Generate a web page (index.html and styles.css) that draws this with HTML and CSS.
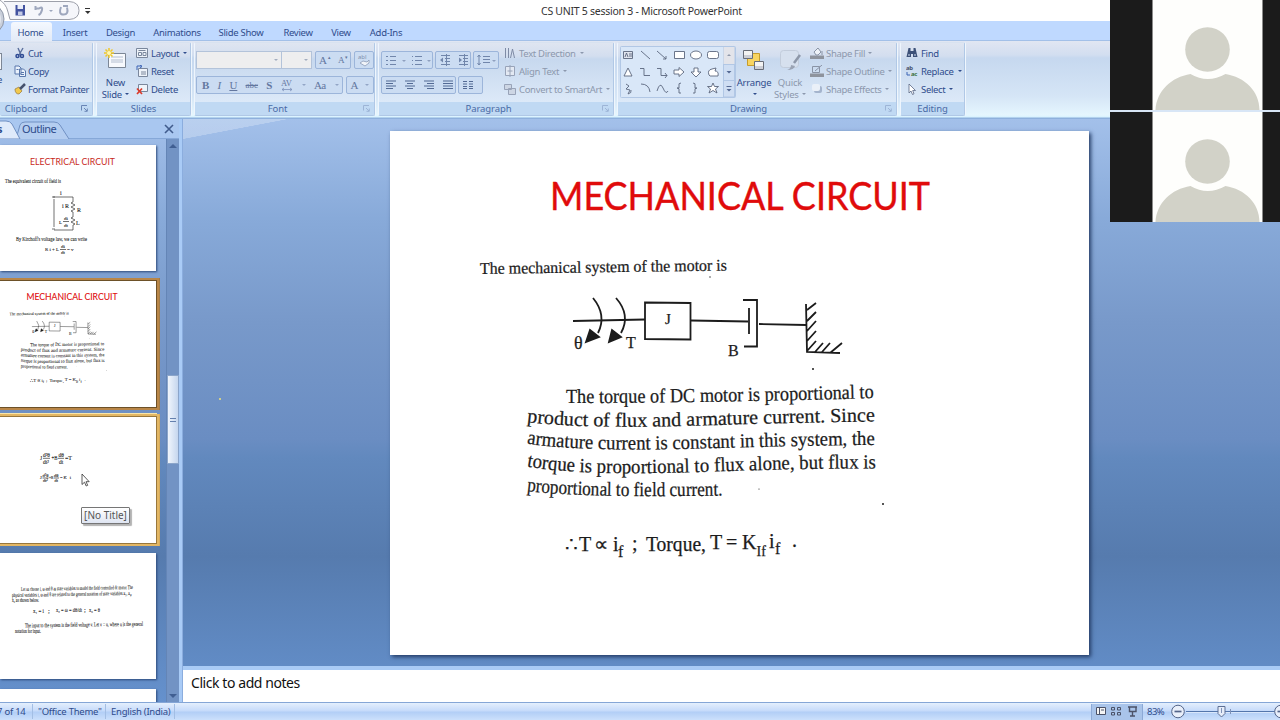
FILE: index.html
```html
<!DOCTYPE html>
<html lang="en">
<head>
  <meta charset="UTF-8">
  <meta name="viewport" content="width=device-width, initial-scale=1.0">
  <title>CS UNIT 5 session 3 - Microsoft PowerPoint</title>
  <link rel="stylesheet" href="styles.css">
</head>
<body>
  <!-- shared drawings -->
  <svg class="defs" width="0" height="0">
    <symbol id="launcher" viewBox="0 0 7 7"><path d="M.5 5.500V.5H6M3 3l3 3M6.300 3.500v2.800H3.500" fill="none" stroke="currentColor"/></symbol>
    <symbol id="slide-mech" viewBox="390 131 700 525">
      <text x="550" y="210" class="slide-title" textLength="380" lengthAdjust="spacingAndGlyphs">MECHANICAL CIRCUIT</text>
      <g class="scan">
        <text x="480" y="274" font-size="16.500" textLength="247" lengthAdjust="spacingAndGlyphs" transform="rotate(-.8 480 274)">The mechanical system of the motor is</text>
        <g class="wire">
          <path d="M573 321L645 319.500M691 320.500L748 321.500M759 324L806 325"/>
          <path d="M645 302.500L690.500 303V339.500L645 339Z"/>
          <path d="M743 300H757V346.500H744M749 308V334"/>
          <path d="M806 304L807 352L840 353M807 310l9-7M807 321l9-9M807 331l9-10M807 341l9-10M807 351l9-10M815 352l8-9M822 352l8-9M830 353l12-10"/>
          <path d="M593 298Q607 315 598 333M616 298Q631 315 621 333"/>
          <path class="head" d="M586 342L590 330L599 337ZM609 342L612 330L621 337Z"/>
        </g>
        <text x="574" y="349" font-size="18">θ</text>
        <text x="626" y="348" font-size="16">T</text>
        <text x="665" y="324" font-size="15">J</text>
        <text x="728" y="356" font-size="16">B</text>
        <path id="l1" d="M566 403Q700 403 876 398" fill="none"/>
        <path id="l2" d="M527 422Q580 429 700 425.500T876 421.500" fill="none"/>
        <path id="l3" d="M527 443.500Q580 452 700 448.500T876 445" fill="none"/>
        <path id="l4" d="M527 466.500Q580 476 700 472T877 468.500" fill="none"/>
        <path id="l5" d="M527 491Q580 498 725 495.500" fill="none"/>
        <text class="para"><textPath href="#l1" textLength="308" lengthAdjust="spacingAndGlyphs">The torque of DC motor is proportional to</textPath></text>
        <text class="para"><textPath href="#l2" textLength="348" lengthAdjust="spacingAndGlyphs">product of flux and armature current. Since</textPath></text>
        <text class="para"><textPath href="#l3" textLength="348" lengthAdjust="spacingAndGlyphs">armature current is constant in this system, the</textPath></text>
        <text class="para"><textPath href="#l4" textLength="349" lengthAdjust="spacingAndGlyphs">torque is proportional to flux alone, but flux is</textPath></text>
        <text class="para"><textPath href="#l5" textLength="196" lengthAdjust="spacingAndGlyphs">proportional to field current.</textPath></text>
        <text class="para" y="551"><tspan x="565">∴</tspan><tspan x="579">T</tspan><tspan x="594">∝</tspan><tspan x="613">i</tspan><tspan x="618" y="557" font-size="16">f</tspan><tspan x="632" y="550">;</tspan></text>
        <text class="para" x="646" y="551" textLength="60" lengthAdjust="spacingAndGlyphs">Torque,</text>
        <text class="para" y="549"><tspan x="710">T</tspan><tspan x="726">=</tspan><tspan x="742">K</tspan><tspan x="756.500" y="556" font-size="14">If</tspan><tspan x="769" y="548">i</tspan><tspan x="775" y="554" font-size="16">f</tspan><tspan x="792" y="547">.</tspan></text>
        <circle cx="883" cy="504" r="1"/><circle cx="813" cy="369" r="1"/><circle cx="710" cy="277" r=".7"/><circle cx="759" cy="489" r=".6"/>
      </g>
    </symbol>
    <symbol id="person" viewBox="0 0 110 110">
      <rect width="110" height="110" fill="#fefefc"/>
      <circle cx="55" cy="49.500" r="22.300" fill="#d2d2c8"/>
      <path d="M3 110C4 91 19 77 38 74Q55 84 73 74C92 77 107 91 107 110Z" fill="#d2d2c8"/>
    </symbol>
  </svg>

  <div class="app">
    <header class="titlebar">
      <svg class="quick" width="96" height="21" viewBox="0 0 96 21">
        <path d="M-2 -1Q6 3 8 12L10 19.500H69Q79 19 79 10.500T69 1.500H4" fill="#f5f6fa" stroke="#9da0aa"/>
        <path d="M15.500 5h9.500v10.500h-9.500z" fill="#4353a0"/><path d="M17.500 5h5.500v4h-5.500z" fill="#e9edf8"/><path d="M18 11.500h4.500V15H18z" fill="#c3cae6"/>
        <g fill="none" stroke="#9ea7bd" stroke-width="2"><path d="M36 8.500h3q4-2.500 3 1.500t-3.500 5M35.500 6v4"/><path d="M67 7.500q2 7-3.500 7t-2.500-7.500M63 6h5"/></g>
        <path d="M49 10h4l-2 2z" fill="#9ea7bd"/>
        <path d="M85 8.500h5" stroke="#333"/><path d="M85 11h5.500l-2.700 3z" fill="#333"/>
      </svg>
      <span class="doc-name">CS UNIT 5 session 3 - Microsoft PowerPoint</span>
    </header>

    <nav class="tabs">
      <span class="tab active">Home</span>
      <span class="tab t-insert">Insert</span>
      <span class="tab t-design">Design</span>
      <span class="tab t-anim">Animations</span>
      <span class="tab t-show">Slide Show</span>
      <span class="tab t-review">Review</span>
      <span class="tab t-view">View</span>
      <span class="tab t-add">Add-Ins</span>
    </nav>
    <svg class="orb" width="6" height="32" viewBox="0 0 6 32"><circle cx="-12" cy="17" r="16" fill="#c9cfda" stroke="#8e97a8"/><circle cx="-12" cy="17" r="13" fill="#e4e8ef"/></svg>

    <div class="ribbon">
      <section class="group clipboard">
        <div class="body">
          <div class="paste"><i></i><span>e</span></div>
          <div class="stack">
            <div class="cmd"><svg width="12" height="12" viewBox="0 0 12 12"><path d="M4 1l3 7M9 1L5 8" stroke="#5b6f9c" stroke-width="1.400"/><g fill="none" stroke="#2f4b94" stroke-width="1.500"><circle cx="3.500" cy="9" r="1.500"/><circle cx="8" cy="9" r="1.500"/></g></svg>Cut</div>
            <div class="cmd"><svg width="12" height="12" viewBox="0 0 12 12"><path d="M1 1h4l2 2v6H1zM5.500 4h4l2 2v5.500h-6z" fill="#e9f1fc" stroke="#5876ab"/><path d="M7 7.500h3M7 9.500h3M2.500 4.500h2" stroke="#5876ab"/></svg>Copy</div>
            <div class="cmd"><svg width="12" height="12" viewBox="0 0 12 12"><path d="M1 6l4-2 3 4-3 3Q1 11 1 6z" fill="#f2c94c" stroke="#96773a" stroke-width=".7"/><path d="M6 6l5-5" stroke="#45516e" stroke-width="2.500"/></svg>Format Painter</div>
          </div>
        </div>
        <div class="label"><span>Clipboard</span><svg><use href="#launcher"/></svg></div>
      </section>

      <section class="group slides">
        <div class="body">
          <div class="big">
            <svg width="24" height="24" viewBox="0 0 24 24"><path d="M4.500 5.500h17v14h-17z" fill="#f7f9fd" stroke="#7c8796"/><path d="M7 9h12M7 12h12M7 14h12" stroke="#b3bed0"/><path d="M5 0v10M0 5h10M1.500 1.500l7 7M8.500 1.500l-7 7" stroke="#f1c928" stroke-width="1.500"/><circle cx="5" cy="5" r="2" fill="#fff7b4"/></svg>
            <span>New</span><span>Slide <b></b></span>
          </div>
          <div class="stack">
            <div class="cmd"><svg width="12" height="12" viewBox="0 0 12 12"><path d="M.5 1.500h11v9H.5z" fill="#eef3fa" stroke="#7a879c"/><path d="M2.500 3.500h7M2.500 5.500h3v3h-3zM7 5.500h3v3H7z" fill="none" stroke="#7a879c"/></svg>Layout <b></b></div>
            <div class="cmd"><svg width="12" height="12" viewBox="0 0 12 12"><path d="M2.500 3.500h9v8h-9z" fill="#eef3fa" stroke="#7a879c"/><path d="M5 7h5M5 9h5" stroke="#7a879c"/><path d="M1 5V1h5M4 0l2 1.500L4 3" fill="none" stroke="#3d64b5"/></svg>Reset</div>
            <div class="cmd"><svg width="12" height="12" viewBox="0 0 12 12"><path d="M2.500 1.500h9v7h-9z" fill="#eef3fa" stroke="#7a879c"/><path d="M1 5.500l5 5.500M6 5.500L1 11" stroke="#dc3b2b" stroke-width="1.700"/></svg>Delete</div>
          </div>
        </div>
        <div class="label"><span>Slides</span></div>
      </section>

      <section class="group font">
        <div class="body rows">
          <div class="row">
            <div class="combo wide"><b></b></div><div class="combo"><b></b></div>
            <div class="box serif grow">A<sup>▴</sup><small>A<sup>▾</sup></small></div>
            <div class="box clear"><svg width="14" height="13" viewBox="0 0 14 13"><text x="1" y="5" font-size="6" fill="#7f8fae">abl</text><path d="M3 9l3-2 4 1 2-2v3l-4 3z" fill="#f1f4f9" stroke="#8d9cb8" stroke-width=".8"/></svg></div>
          </div>
          <div class="row">
            <div class="box serif letters"><strong>B</strong><em>I</em><u>U</u><s>abc</s><strong>S</strong><svg width="12" height="13" viewBox="0 0 12 13"><text x="0" y="7" font-size="8.500" textLength="11" fill="#63779f">AV</text><path d="M1 10.500h10M3 9l-2 1.500L3 12M9 9l2 1.500L9 12" fill="none" stroke="#7d92ba" stroke-width=".8"/></svg><b></b><span>Aa</span><b></b></div>
            <div class="box serif colour">A <b></b></div>
          </div>
        </div>
        <div class="label"><span>Font</span><svg class="off"><use href="#launcher"/></svg></div>
      </section>

      <section class="group paragraph">
        <div class="body">
          <div class="rows">
            <div class="row">
              <div class="box"><svg width="50" height="16" viewBox="0 0 50 16"><path d="M4 4.500h2M4 8.500h2M4 12.500h2M8 4.500h6M8 8.500h6M8 12.500h6M30 4.500h1M30 8.500h1M30 12.500h1M33 4.500h7M33 8.500h7M33 12.500h7" stroke="#7186ab"/><path d="M20 8h4l-2 2zM45 8h4l-2 2z" fill="#8fa0bf"/></svg></div>
              <div class="box"><svg width="34" height="16" viewBox="0 0 34 16"><path d="M5 3.500h9M9 6.500h5M9 9.500h5M5 12.500h9M23 3.500h9M27 6.500h5M27 9.500h5M23 12.500h9M10.500 2v12M28.500 2v12" stroke="#7186ab"/><path d="M4 8l3-2.500v5zM26 8l-3-2.500v5z" fill="#7186ab"/></svg></div>
              <div class="box"><svg width="24" height="16" viewBox="0 0 24 16"><path d="M5 3v10M3.500 5L5 3l1.500 2M3.500 11L5 13l1.500-2M9 4.500h7M9 7.500h7M9 10.500h7" stroke="#7186ab" fill="none"/><path d="M18 8h4l-2 2z" fill="#8fa0bf"/></svg></div>
            </div>
            <div class="row">
              <div class="box"><svg width="73" height="16" viewBox="0 0 73 16"><path d="M4 4h10M4 6.500h7M4 9h10M4 11.500h7M23 4h10M25 6.500h6M23 9h10M25 11.500h6M42 4h10M45 6.500h7M42 9h10M45 11.500h7M61 4h10M61 6.500h10M61 9h10M61 11.500h10" stroke="#536a94"/></svg></div>
              <div class="box"><svg width="23" height="16" viewBox="0 0 23 16"><path d="M4 4.500h4M4 7h4M4 9.500h4M4 11.500h4M10 4.500h4M10 7h4M10 9.500h4M10 11.500h4" stroke="#536a94"/></svg></div>
            </div>
          </div>
          <div class="stack dim">
            <div class="cmd"><svg width="12" height="12" viewBox="0 0 12 12"><path d="M1.500 1v10M4.500 1v10M6.500 11l2-9 2 9" stroke="#7f8ba5" fill="none"/></svg>Text Direction <b></b></div>
            <div class="cmd"><svg width="12" height="12" viewBox="0 0 12 12"><path d="M1.500 1.500h9v9h-9z" fill="#e3e9f3" stroke="#98a3b8"/><path d="M3.500 6h5M6 0v12" stroke="#98a3b8"/></svg>Align Text <b></b></div>
            <div class="cmd"><svg width="12" height="12" viewBox="0 0 12 12"><path d="M.5 1.500h7v5h-7zM4.500 5.500h7v6h-7z" fill="#cdd6e4" stroke="#98a3b8"/></svg>Convert to SmartArt <b></b></div>
          </div>
        </div>
        <div class="label"><span>Paragraph</span><svg class="off"><use href="#launcher"/></svg></div>
      </section>

      <section class="group drawing">
        <div class="body">
          <svg class="gallery" width="116" height="53" viewBox="0 0 116 53">
            <rect x=".5" y=".5" width="115" height="51" rx="1" fill="#d9e7f8" stroke="#b1c7e5"/>
            <g fill="none" stroke="#5b667e" stroke-width=".9">
              <path d="M3.500 5.500h9v7h-9z" fill="#dfe4ee"/><path d="M5 11l1.500-4L8 11M9 8h3M9 10h3"/>
              <path d="M21 5l9 8M37 5l9 8M46 10v3h-3"/><path d="M54.500 5.500h10v7h-10z" fill="#fff"/><ellipse cx="76" cy="9" rx="5.500" ry="4" fill="#fff"/><rect x="87.500" y="5.500" width="11" height="7" rx="2" fill="#fff"/>
              <path d="M4 30l4-8 4 8z" fill="#fff"/><path d="M20 22.500h4v7h6M37 22.500h4v7h6M45 27l2 2.500-2 2.500"/><path d="M54 24h5v-2.500l5 4.500-5 4.500V28h-5zM74 22h4v4h3l-5 5-5-5h3z" fill="#fff"/><path d="M89 29q-2-5 3-6l4-1-1 3q4 0 3 5h-8z" fill="#fff"/>
              <path d="M6 38l3 2-3 3 4 1-2 4q4-1 3-4"/><path d="M21 38q8 0 9 8M37 45q3-10 6-3t5 3"/><path d="M61 37q-3 0-2 3t-2 2q3 0 2 3t2 2M73 37q3 0 2 3t2 2q-3 0-2 3t-2 2"/><path d="M93 37l1.500 3.500h4L95.500 43l1.500 4-4-2.500L89 47l1.500-4-3-2.500h4z" fill="#fff"/>
            </g>
            <path d="M103.500 1h11v50h-11z" fill="#cfdef3" stroke="#b1c7e5"/><path d="M103.500 1h11v17h-11z" fill="#e3e4ea"/><path d="M103.500 18.500h11M103.500 34.500h11" stroke="#b1c7e5"/>
            <path d="M107 10h4l-2-2z" fill="#8f98aa"/><path d="M106.500 25h5l-2.500 2.500zM106.500 43h5l-2.500 2.500z" fill="#566a94"/><path d="M106.500 40.500h5" stroke="#566a94"/>
          </svg>
          <div class="big arrange">
            <svg width="22" height="22" viewBox="0 0 22 22"><path d="M4.500 4.500h12v12h-12z" fill="#f8d460" stroke="#c79c2a"/><path d="M.5 1.500h9v8h-9zM11.500 12.500h9v8h-9z" fill="#f3f3f3" stroke="#686d78"/><path d="M1 7.500h8M12 18.500h8" stroke="#cdcfd6" stroke-width="3"/></svg>
            <span>Arrange</span><span><b></b></span>
          </div>
          <div class="big dim quick-styles">
            <svg width="22" height="22" viewBox="0 0 22 22"><rect x="1.500" y="1.500" width="18" height="17" rx="3" fill="#d6e0ee" stroke="#c2ccdb"/><path d="M21 6l-6 8" stroke="#8d97a9" stroke-width="2.500"/><path d="M8 21q4-1 4-5l4 1q-1 4-8 4z" fill="#9aa3b3"/></svg>
            <span>Quick</span><span>Styles <b></b></span>
          </div>
          <div class="stack dim">
            <div class="cmd"><svg width="14" height="12" viewBox="0 0 14 12"><path d="M0 8.500h14V12H0z" fill="#8e939d"/><path d="M4 5l4-4 3 4-3 3H6zM12 4v4" fill="#eef2f8" stroke="#8993a5"/></svg>Shape Fill <b></b></div>
            <div class="cmd"><svg width="14" height="12" viewBox="0 0 14 12"><path d="M0 8.500h14V12H0z" fill="#8e939d"/><path d="M2.500 1.500h7v6h-7zM5 6l7-6" fill="none" stroke="#8993a5"/></svg>Shape Outline <b></b></div>
            <div class="cmd"><svg width="14" height="12" viewBox="0 0 14 12"><rect x="4" y="3" width="8" height="7" rx="2" fill="#a4b4cd"/><rect x="2" y="1" width="8" height="7" rx="2" fill="#eaf0f8"/></svg>Shape Effects <b></b></div>
          </div>
        </div>
        <div class="label"><span>Drawing</span><svg class="off"><use href="#launcher"/></svg></div>
      </section>

      <section class="group editing">
        <div class="body">
          <div class="stack">
            <div class="cmd"><svg width="12" height="12" viewBox="0 0 12 12"><path d="M2.500 1h2v3h3V1h2l2 9H7V7H5v3H.5z" fill="#3d5178"/><path d="M2 8h2M8 8h2" stroke="#d6e2f4"/></svg>Find</div>
            <div class="cmd"><svg width="12" height="12" viewBox="0 0 12 12"><text x="0" y="5" font-size="6" font-weight="bold" fill="#45516e">ab</text><text x="5" y="11" font-size="6" font-weight="bold" fill="#3c7040">ac</text><path d="M1 7v3h3" fill="none" stroke="#3d64b5"/></svg>Replace <b></b></div>
            <div class="cmd"><svg width="12" height="12" viewBox="0 0 12 12"><path d="M3 1v9l2-2 1.500 3.500 1.500-.7L6.700 7.500h2.800z" fill="#fff" stroke="#5b6784" stroke-width=".8"/></svg>Select <b></b></div>
          </div>
        </div>
        <div class="label"><span>Editing</span></div>
      </section>
    </div>

    <main class="work">
      <aside class="panel">
        <div class="panel-tabs">
          <svg width="72" height="20" viewBox="0 0 72 20"><path d="M16 20L20 6Q21 3 25 3H54Q58 3 60 6L69 20" fill="#b4cdf0" stroke="#7191c3"/><path d="M-1 2H6Q10 2 12 5L20 20H-1z" fill="#dfeafa" stroke="#7191c3"/></svg>
          <span class="pt-first">s</span><span class="pt-outline">Outline</span>
          <svg class="close" width="10" height="10" viewBox="0 0 10 10"><path d="M1 1l8 8M9 1L1 9" stroke="#415c8d" stroke-width="1.600"/></svg>
        </div>
        <div class="panel-body">
          <div class="thumbs">
            <div class="thumb">
              <svg width="156" height="126" viewBox="0 145 156 126">
                <text x="30" y="164.500" class="thumb-title" textLength="85" lengthAdjust="spacingAndGlyphs">ELECTRICAL CIRCUIT</text>
                <g class="scan small">
                  <text x="5" y="183" textLength="56" lengthAdjust="spacingAndGlyphs">The equivalent circuit of field is</text>
                  <path d="M53 197H73M54 230H73M73 197v5l-2 1 4 2-4 2 4 2-4 2 2 1v5l-2 1 4 2-4 2 4 2-2 1v5M54 199v28M52 197h3M52 229h3" class="thin"/>
                  <text x="60" y="195" font-size="6">i</text><text x="62" y="208" font-size="6" textLength="7">iR</text><text x="77" y="212" font-size="6">R</text><text x="76" y="225" font-size="6">L</text>
                  <text x="59" y="224" font-size="5">L</text><text x="64" y="220" font-size="5">di</text><path d="M63 221.500h6" class="thin"/><text x="64" y="227" font-size="5">dt</text>
                  <text x="16" y="241" textLength="71" lengthAdjust="spacingAndGlyphs">By Kirchoff's voltage law, we can write</text>
                  <text x="45" y="251" font-size="5" textLength="14" lengthAdjust="spacingAndGlyphs">R i + L</text><text x="61" y="248" font-size="5">di</text><path d="M60 249.500h6" class="thin"/><text x="61" y="254" font-size="5">dt</text><text x="67" y="251" font-size="5">= v</text>
                </g>
              </svg>
            </div>
            <div class="thumb current"><svg class="mech" width="168" height="126"><use href="#slide-mech"/></svg></div>
            <div class="thumb hover">
              <svg width="156" height="126" viewBox="0 417 156 126">
                <g class="scan small">
                  <text x="40" y="459.500" font-size="5.500">J</text><text x="43" y="457" font-size="5.500" textLength="7" lengthAdjust="spacingAndGlyphs">d²θ</text><path d="M43 458.300h7M58 458.300h6" class="thin"/><text x="43" y="464" font-size="5.500" textLength="6" lengthAdjust="spacingAndGlyphs">dt²</text><text x="51.500" y="459.500" font-size="5.500" textLength="6" lengthAdjust="spacingAndGlyphs">+B</text><text x="58.500" y="457" font-size="5.500">dθ</text><text x="59" y="463.500" font-size="5.500">dt</text><text x="65" y="459.500" font-size="5.500" textLength="7" lengthAdjust="spacingAndGlyphs">=T</text>
                  <text x="40" y="479" font-size="4.500">J</text><text x="42.500" y="477" font-size="4.500" textLength="6" lengthAdjust="spacingAndGlyphs">d²θ</text><path d="M42.500 478h6M54 478h5" class="thin"/><text x="43" y="482" font-size="4.500" textLength="5" lengthAdjust="spacingAndGlyphs">dt²</text><text x="49" y="479" font-size="4.500" textLength="4.500" lengthAdjust="spacingAndGlyphs">+B</text><text x="54" y="477" font-size="4.500">dθ</text><text x="54.500" y="482" font-size="4.500">dt</text><text x="60" y="479" font-size="4.500" textLength="11">=K i</text>
                </g>
              </svg>
            </div>
            <div class="thumb">
              <svg width="156" height="126" viewBox="0 553 156 126">
                <g class="scan small">
                  <text x="21" y="591" textLength="112" font-size="5.500" lengthAdjust="spacingAndGlyphs" transform="rotate(-1 21 591)">Let us choose i, ω and θ as state variables to model the field controlled dc motor. The</text>
                  <text x="12" y="597" textLength="120" font-size="5.500" lengthAdjust="spacingAndGlyphs" transform="rotate(-1 12 597)">physical variables i, ω and θ are related to the general notation of state variables x₁, x₂,</text>
                  <text x="12" y="602" textLength="27" font-size="5.500" lengthAdjust="spacingAndGlyphs">x₃ as shown below.</text>
                  <g font-size="6.500"><text x="33" y="613" textLength="11" lengthAdjust="spacingAndGlyphs">x₁ = i</text><text x="48" y="613">;</text><text x="56" y="612" textLength="26" lengthAdjust="spacingAndGlyphs">x₂ = ω = dθ/dt</text><text x="84" y="612">;</text><text x="89" y="612" textLength="11" lengthAdjust="spacingAndGlyphs">x₃ = θ</text></g>
                  <text x="25" y="627.500" textLength="118" font-size="6" lengthAdjust="spacingAndGlyphs" transform="rotate(-.8 25 627)">The input to the system is the field voltage v. Let v = u, where u is the general</text>
                  <text x="15" y="633" textLength="26" font-size="5.500" lengthAdjust="spacingAndGlyphs">notation for input.</text>
                </g>
              </svg>
            </div>
            <div class="thumb last"></div>
          </div>
          <div class="scroll">
            <div class="arrow up"></div>
            <div class="handle"></div>
            <div class="arrow down"></div>
          </div>
        </div>
        <div class="tooltip">[No Title]</div>
        <svg class="pointer" width="9" height="14" viewBox="0 0 9 14"><path d="M1 1v10.500l2.500-2.300L5.200 13l1.500-.7L5 8.700h3.200z" fill="#fff" stroke="#333" stroke-width=".8"/></svg>
      </aside>

      <div class="divider"></div>

      <div class="editor">
        <div class="canvas">
          <i class="laser"></i>
          <div class="slide"><svg width="700" height="525"><use href="#slide-mech"/></svg></div>
        </div>
        <div class="notes">Click to add notes</div>
      </div>
    </main>

    <footer class="status">
      <span class="cell page">7 of 14</span>
      <span class="cell theme">"Office Theme"</span>
      <span class="cell lang">English (India)</span>
      <div class="views">
        <svg width="50" height="16" viewBox="0 0 50 16"><g fill="none" stroke="#4b5268"><path d="M4.500 3.500h9v7h-9zM7.500 3v8M9 6h3" fill="#f4f4f4"/><path d="M19.500 3.500h3V6h-3zM25.500 3.500h3V6h-3zM19.500 8.500h3V11h-3zM25.500 8.500h3V11h-3z"/><path d="M36 3h9M37.500 3v4.500h6.500V3M40.500 8v4M38 12h5" stroke-width="1.400"/></g></svg>
      </div>
      <span class="percent">83%</span>
      <svg width="110" height="18" viewBox="0 0 110 18">
        <path d="M16 8.500h92" stroke="#5476ac"/><path d="M16 9.500h92" stroke="#d9e7fb"/>
        <circle cx="8" cy="8.500" r="6.300" fill="#e9effa" stroke="#54658a"/><path d="M4.500 8.500h7" stroke="#54658a" stroke-width="1.700"/>
        <path d="M48 3.500h7v7l-3.500 3.500L48 10.500z" fill="#e6edf9" stroke="#5d6f94"/><path d="M51.500 5v5M60.500 6v5" stroke="#7f92b8"/>
        <circle cx="111" cy="8.500" r="6.300" fill="#e9effa" stroke="#54658a"/><path d="M107.500 8.500h5" stroke="#54658a" stroke-width="1.700"/>
      </svg>
    </footer>

    <div class="video">
      <div class="tile"><svg width="111" height="110"><use href="#person"/></svg></div>
      <div class="tile"><svg width="111" height="110"><use href="#person"/></svg></div>
    </div>
  </div>
</body>
</html>
```

FILE: styles.css
```css
* {
  box-sizing: border-box;
}

body {
  margin: 0;
  font-family: "Noto Sans", "Open Sans", sans-serif;
  font-size: 9.5px;
  color: #2f4c8c;
}

svg {
  display: block;
  flex: none;
}

.defs {
  position: absolute;
}

.app {
  position: relative;
  width: 1280px;
  height: 720px;
  overflow: hidden;
  display: flex;
  flex-direction: column;
}

/* title bar */
.titlebar {
  height: 21px;
  flex: none;
  display: flex;
  align-items: center;
  background: #fff;
}

.doc-name {
  margin-left: 445px;
  white-space: nowrap;
  color: #333;
  font-size: 10.5px;
  letter-spacing: -0.26px;
}

.orb {
  position: absolute;
  left: 0;
  top: 2px;
}

/* tabs */
.tabs {
  height: 20px;
  flex: none;
  display: flex;
  padding: 1px 0 0 11px;
  background: #bfd9ff;
  border-bottom: 1px solid #a3c0e8;
}

.tab {
  height: 19px;
  line-height: 21px;
  text-align: center;
  white-space: nowrap;
  letter-spacing: -0.3px;
}

.tab.active {
  width: 41px;
  height: 20px;
  padding-right: 2px;
  background: linear-gradient(#f4f8fe, #e2eaf6);
  border-radius: 3px 3px 0 0;
}

.t-insert { width: 46px; }
.t-design { width: 45px; }
.t-anim { width: 68px; }
.t-show { width: 60px; }
.t-review { width: 54px; }
.t-view { width: 32px; }
.t-add { width: 58px; }

/* ribbon */
.ribbon {
  height: 78px;
  flex: none;
  display: flex;
  gap: 3px;
  padding: 1px 0 3px;
  background: linear-gradient(#e1e6f2 0, #d2def0 14px, #c6d8ef 17px, #d5e5f6 55px, #e5f6fe 74px, #d8f3ff 76px, #8eb0dc 77px);
}

.group {
  height: 74px;
  flex: none;
  display: flex;
  flex-direction: column;
  border: 1px solid #b0c8e6;
  border-left-color: #eef5fd;
  border-top-color: #d8e2f0;
  border-radius: 2px;
  background: linear-gradient(#dfe5f1 0, #d3deef 13px, #c7d8ee 16px, #dce9f8 59px);
  box-shadow: 1px 0 0 #eff6fd;
}

.clipboard { width: 93px; border-left: none; }
.slides { width: 95px; }
.font { width: 181px; }
.paragraph { width: 236px; }
.drawing { width: 280px; }
.editing { width: 65px; }

.group .body {
  height: 59px;
  display: flex;
  overflow: hidden;
}

.group .label {
  height: 13px;
  display: flex;
  align-items: center;
  background: #c0d9f3;
  color: #4a6ba6;
}

.label span {
  flex: 1;
  text-align: center;
  letter-spacing: -0.1px;
}

.label svg {
  width: 7px;
  height: 7px;
  margin-right: 4px;
  color: #6985b5;
}

.label svg.off {
  color: #9db4d6;
}

.clipboard .label span { padding-right: 29px; }
.font .label span { padding-right: 3px; }
.paragraph .label span { padding-right: 4px; }
.drawing .label span { padding-right: 6px; }

/* drop-down arrow */
b {
  display: inline-block;
  border: 2px solid transparent;
  border-top-color: currentColor;
  border-bottom: 0;
  margin-left: 1px;
  vertical-align: 3px;
}

.stack {
  display: flex;
  flex-direction: column;
  padding-top: 1px;
}

.cmd {
  height: 18px;
  display: flex;
  align-items: center;
  gap: 3px;
  white-space: nowrap;
  letter-spacing: -0.33px;
}

.dim {
  color: #8c98ad;
}

.big {
  display: flex;
  flex-direction: column;
  align-items: center;
  line-height: 12px;
  letter-spacing: -0.2px;
  white-space: nowrap;
}

.paste {
  width: 14px;
  padding-top: 10px;
}

.paste i {
  display: block;
  width: 2px;
  height: 17px;
  border: 1px solid #7d8796;
  border-left: 0;
  background: #f4f6fa;
}

.paste span {
  display: block;
  margin: 3px 0 0 -3px;
}

.clipboard .cmd {
  gap: 2px;
  letter-spacing: -0.42px;
}

.slides .big {
  width: 39px;
  padding: 5px 2px 0 0;
}

.slides .big svg { margin-bottom: 5px; }

/* font group */
.rows {
  display: flex;
  flex-direction: column;
  gap: 7px;
  padding: 8px 0 0 1px;
}

.row {
  display: flex;
  gap: 3px;
  height: 18px;
}

.combo {
  width: 32px;
  margin-left: -4px;
  display: flex;
  align-items: center;
  justify-content: flex-end;
  padding-right: 3px;
  background: #eeeeef;
  border: 1px solid #b3c3da;
  color: #a3adbf;
}

.combo.wide {
  width: 86px;
  margin-left: 0;
}

.box {
  display: flex;
  align-items: center;
  justify-content: center;
  border: 1px solid #9cb5da;
  border-radius: 2px;
  background: #cbdcf2;
  color: #63779f;
}

.rows .serif {
  font-family: "Liberation Serif", serif;
  font-size: 11px;
}

.box sup {
  font-size: 5px;
  margin-bottom: 6px;
}

.grow { width: 36px; gap: 1px; }
.grow small { margin-left: 6px; }
.clear { width: 20px; }

.rows .letters {
  width: 147px;
  justify-content: space-between;
  padding: 0 3px 0 5px;
}

.letters s { font-size: 9px; }
.letters span { letter-spacing: -0.5px; }
.letters b, .colour b { color: #93a5c6; }
.colour { width: 28px; gap: 6px; }

.paragraph .stack { margin-left: 3px; }
.paragraph .rows { width: 122px; flex: none; padding-left: 2px; }
.paragraph .row { gap: 2px; }

/* drawing group */
.gallery { margin: 3px 0 0 2px; }

.arrange {
  width: 44px;
  padding: 6px 0 0 0;
  margin-left: -4px;
}

.big.arrange svg, .quick-styles svg { margin-bottom: 6px; }

.quick-styles {
  width: 30px;
  padding-top: 6px;
  margin-left: -1px;
  margin-right: 5px;
}

.drawing .cmd { gap: 2px; }
.editing .stack { margin-left: 5px; }

/* work area */
.work {
  height: 583px;
  flex: none;
  display: flex;
  background: linear-gradient(#a3c0ea 0, #88aad9 17%, #7899ca 35%, #6a8dc2 55%, #6289be 58%, #567bae 75%, #6591cd 100%);
}

.panel {
  position: relative;
  width: 179px;
  display: flex;
  flex-direction: column;
}

.panel-tabs {
  position: relative;
  height: 20px;
  flex: none;
  border-bottom: 1px solid #86a8d8;
  background: #a9c7f0;
}

.pt-first, .pt-outline {
  position: absolute;
  top: 2px;
  font-size: 11px;
  line-height: 16px;
}

.pt-first {
  left: -3px;
  font-weight: bold;
}

.pt-outline {
  left: 22px;
  letter-spacing: -0.55px;
}

.close {
  position: absolute;
  left: 164px;
  top: 5px;
}

.panel-body {
  flex: 1;
  min-height: 0;
  display: flex;
}

.thumbs {
  width: 166px;
  padding-top: 6px;
  overflow: hidden;
  display: flex;
  flex-direction: column;
  gap: 10px;
}

.thumb {
  width: 156px;
  height: 126px;
  flex: none;
  background: #fff;
  box-shadow: 1px 1px 2px #2d4a7a;
  overflow: hidden;
}

.thumb .mech {
  margin-left: -12px;
}

.thumb.current {
  box-shadow: 0 0 0 1px #6d5128, 0 0 0 3px #b98648, 1px 0 0 3px #a37c48;
}

.thumb.hover {
  box-shadow: 0 0 0 1px #98773c, 0 0 0 3px #e3b765, 1px 0 0 3px #d6ab5c, 0 -3px 0 1px #f8e6a8;
}

.scroll {
  width: 13px;
  display: flex;
  flex-direction: column;
  align-items: center;
  background: #7293c4;
  border-left: 1px solid #6485b6;
}

.arrow {
  border: 4px solid transparent;
}

.arrow.up {
  margin-top: 1px;
  border-bottom-color: #405f92;
}

.arrow.down {
  margin-top: auto;
  border-top-color: #405f92;
}

.handle {
  width: 12px;
  height: 89px;
  margin-top: 227px;
  flex: none;
  border: 1px solid #8ba5ca;
  background: linear-gradient(#6480ae, #6480ae) center 42px / 6px 1px no-repeat,
    linear-gradient(#6480ae, #6480ae) center 45px / 6px 1px no-repeat,
    linear-gradient(90deg, #f0f5fc, #c5d6ee);
}

.tooltip {
  position: absolute;
  left: 81px;
  top: 388px;
  width: 49px;
  height: 17px;
  line-height: 15px;
  font-size: 10px;
  text-align: center;
  border: 1px solid #767676;
  border-radius: 1px;
  background: linear-gradient(#fff, #dfe5f2);
  box-shadow: 2px 2px 1px rgba(0, 0, 0, 0.3);
  color: #555;
  white-space: nowrap;
}

.pointer {
  position: absolute;
  left: 81px;
  top: 354px;
}

.divider {
  width: 4px;
  background: #a9cbf6;
  border-right: 1px solid #8badde;
}

.editor {
  flex: 1;
  display: flex;
  flex-direction: column;
}

/* pale wedge in the top left corner */
.canvas {
  height: 547px;
  flex: none;
  display: flex;
  padding: 12px 0 0 36px;
  background: linear-gradient(to bottom right, rgba(255, 255, 255, 0.25) 49.5%, transparent 50.5%) 0 0 / 105px 20px no-repeat;
}

.laser {
  width: 2px;
  height: 2px;
  margin: 267px 170px 0 0;
  background: #d0cf8c;
}

.slide {
  width: 699px;
  height: 524px;
  margin-left: -1px;
  background: #fff;
  box-shadow: 2px 2px 4px #243c66;
}

.notes {
  flex: 1;
  padding: 3px 8px;
  border-top: 4px solid #a9cbf6;
  background: #fff;
  color: #111;
  font-size: 14px;
  line-height: 20px;
  letter-spacing: -0.43px;
}

/* slide contents */
.slide-title {
  font-family: Lato, sans-serif;
  font-size: 38.500px;
  fill: #e00b0b;
  stroke: #e00b0b;
  stroke-width: 0.4;
}

.thumb-title {
  font-family: Lato, sans-serif;
  font-size: 9.500px;
  fill: #c8291c;
}

.scan {
  font-family: "Liberation Serif", serif;
  fill: #1c1c1c;
}

.scan text {
  stroke: #1c1c1c;
  stroke-width: 0.25;
}

.para {
  font-size: 20px;
}

.wire {
  fill: none;
  stroke: #1c1c1c;
  stroke-width: 1.800;
}

.head {
  fill: #1c1c1c;
}

.small {
  font-size: 6.500px;
}

.small text {
  stroke-width: 0.1;
}

.thin {
  fill: none;
  stroke: #333;
  stroke-width: 0.7;
}

/* status bar */
.status {
  height: 18px;
  flex: none;
  display: flex;
  align-items: center;
  background: linear-gradient(#e4effd 0, #c5dafa 8px, #b2cef6 9px, #cfe2fc 18px);
  border-top: 1px solid #85a6d6;
}

.cell {
  height: 15px;
  line-height: 15px;
  white-space: nowrap;
  border-right: 1px solid #a3bee4;
  letter-spacing: -0.25px;
}

.page {
  width: 33px;
  text-indent: -3px;
}

.theme {
  width: 73px;
  padding-left: 5px;
}

.lang {
  width: 69px;
  padding-left: 5px;
}

.views {
  height: 16px;
  margin-left: 916px;
  background: #a9c4ea;
  border-left: 1px solid #8ca9d6;
  border-right: 1px solid #8ca9d6;
}

.percent {
  width: 27px;
  padding-left: 4px;
  letter-spacing: -0.5px;
}

/* webcam tiles */
.video {
  position: absolute;
  right: 0;
  top: 0;
  width: 170px;
  display: flex;
  flex-direction: column;
  gap: 2px;
  background: #d8e6f6;
}

.tile {
  height: 110px;
  padding-left: 42px;
  background: #1b1b1b;
}
```
